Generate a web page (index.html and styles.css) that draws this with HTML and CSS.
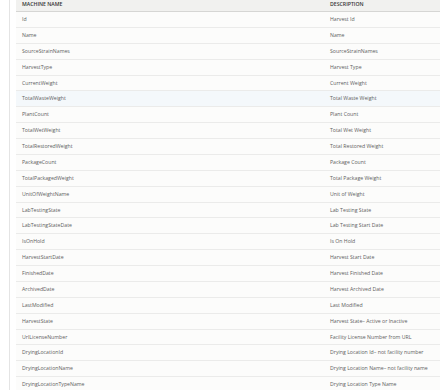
FILE: index.html
```html
<!DOCTYPE html>
<html>
<head>
<meta charset="utf-8">
<link rel="stylesheet" href="styles.css">
</head>
<body>
<div class="page">
  <div class="rail"></div>
  <table class="grid">
    <thead>
      <tr><th class="c1">MACHINE NAME</th><th>DESCRIPTION</th></tr>
    </thead>
    <tbody>
      <tr><td class="c1">Id</td><td>Harvest Id</td></tr>
      <tr><td class="c1">Name</td><td>Name</td></tr>
      <tr><td class="c1">SourceStrainNames</td><td>SourceStrainNames</td></tr>
      <tr><td class="c1">HarvestType</td><td>Harvest Type</td></tr>
      <tr><td class="c1">CurrentWeight</td><td>Current Weight</td></tr>
      <tr class="hover"><td class="c1">TotalWasteWeight</td><td>Total Waste Weight</td></tr>
      <tr><td class="c1">PlantCount</td><td>Plant Count</td></tr>
      <tr><td class="c1">TotalWetWeight</td><td>Total Wet Weight</td></tr>
      <tr><td class="c1">TotalRestoredWeight</td><td>Total Restored Weight</td></tr>
      <tr><td class="c1">PackageCount</td><td>Package Count</td></tr>
      <tr><td class="c1">TotalPackagedWeight</td><td>Total Package Weight</td></tr>
      <tr><td class="c1">UnitOfWeightName</td><td>Unit of Weight</td></tr>
      <tr><td class="c1">LabTestingState</td><td>Lab Testing State</td></tr>
      <tr><td class="c1">LabTestingStateDate</td><td>Lab Testing Start Date</td></tr>
      <tr><td class="c1">IsOnHold</td><td>Is On Hold</td></tr>
      <tr><td class="c1">HarvestStartDate</td><td>Harvest Start Date</td></tr>
      <tr><td class="c1">FinishedDate</td><td>Harvest Finished Date</td></tr>
      <tr><td class="c1">ArchivedDate</td><td>Harvest Archived Date</td></tr>
      <tr><td class="c1">LastModified</td><td>Last Modified</td></tr>
      <tr><td class="c1">HarvestState</td><td>Harvest State– Active or Inactive</td></tr>
      <tr><td class="c1">UrlLicenseNumber</td><td>Facility License Number from URL</td></tr>
      <tr><td class="c1">DryingLocationId</td><td>Drying Location Id– not facility number</td></tr>
      <tr><td class="c1">DryingLocationName</td><td>Drying Location Name– not facility name</td></tr>
      <tr><td class="c1">DryingLocationTypeName</td><td>Drying Location Type Name</td></tr>
    </tbody>
  </table>
</div>
</body>
</html>
```
FILE: styles.css
```css
html, body {
  margin: 0;
  padding: 0;
  background: #ffffff;
  overflow: hidden;
}
.page {
  display: flex;
  width: 440px;
  height: 390px;
  overflow: hidden;
}
.rail {
  flex: 0 0 16px;
  height: 100%;
  box-sizing: border-box;
  border-left: 9px solid #ffffff;
  background: linear-gradient(to right, #e4e4e4 0 1px, #ffffff 1px);
}
.grid {
  flex: 0 0 520px;
  width: 520px;
  border-collapse: collapse;
  table-layout: fixed;
  font-family: "Open Sans", "DejaVu Sans", sans-serif;
  font-size: 5.2px;
  color: #5e5e5e;
  align-self: flex-start;
}
.grid th, .grid td {
  text-align: left;
  padding: 0 0 0 6px;
  white-space: nowrap;
  overflow: hidden;
}
.grid .c1 {
  width: 302px;
}
.grid thead th {
  height: 11px;
  background: #f1f1ef;
  border-bottom: 1px solid #d6d6d4;
  color: #333333;
  font-weight: 600;
  vertical-align: top;
  line-height: 8px;
}
.grid tbody td {
  height: 14.87px;
  line-height: 14.87px;
  background: #fcfcfb;
  border-bottom: 1px solid #ebebea;
}
.grid tbody tr.hover td {
  background: #f4f8fb;
}
```
